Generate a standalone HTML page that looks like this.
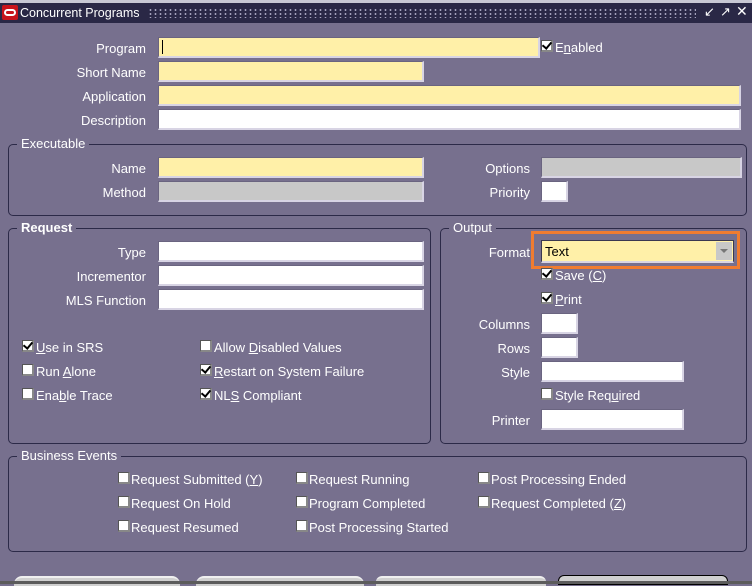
<!DOCTYPE html>
<html><head><meta charset="utf-8"><style>
*{margin:0;padding:0;box-sizing:border-box}
body{width:752px;height:584px;overflow:hidden;background:#77708e;font-family:"Liberation Sans",sans-serif;font-size:13px;color:#fff;position:relative}
.a{position:absolute}
.t{position:absolute;white-space:nowrap;line-height:14px;margin-top:1px}
.r{text-align:right}
.f{position:absolute;height:21px;border-top:1px solid #6a6480;border-left:1px solid #6a6480;border-bottom:2px solid #d8d4e4;border-right:2px solid #d8d4e4}
.y{background:#fff0a8}.g{background:#c8c8c8}.w{background:#fff}
.box{position:absolute;border:1px solid #2c2a48;border-radius:5px}
.lg{position:absolute;background:#77708e;padding:0 4px;line-height:14px;top:-8px;left:8px}
.cb{position:absolute;width:12px;height:12px;background:#fff;border-right:2px solid #888;border-bottom:2px solid #888;border-top:1px solid #555;border-left:1px solid #555}
.cb.c::after{content:"";position:absolute;left:2px;top:-1px;width:4px;height:7px;border:solid #000;border-width:0 2.5px 2.5px 0;transform:rotate(40deg)}
.cl{position:absolute;white-space:nowrap;line-height:14px;margin-top:1px}
u{text-decoration:underline}
</style></head><body>
<div class="a" style="left:0;top:0;width:752px;height:3px;background:#c8c8d4"></div>
<div class="a" style="left:0;top:3px;width:752px;height:20px;background:#2a2846"></div>
<div class="a" style="left:148px;top:8px;width:548px;height:10px;background-image:radial-gradient(#a4a2bc 1px,transparent 1.2px);background-size:5px 4px"></div>
<div class="a" style="left:2px;top:5px;width:16px;height:15px;background:#c8141c;border-radius:2px"></div>
<div class="a" style="left:4px;top:9px;width:12px;height:7px;border:2px solid #fff;border-radius:4px"></div>
<div class="t" style="left:20px;top:5px;color:#fff;font-size:12.5px">Concurrent Programs</div>
<div class="t" style="left:704px;top:4px;font-size:13px">&#8601;</div>
<div class="t" style="left:720px;top:4px;font-size:13px">&#8599;</div>
<div class="t" style="left:736px;top:3px;font-size:14px">&#10005;</div>

<div class="t r" style="right:606px;top:41px">Program</div>
<div class="f y" style="left:158px;top:37px;width:382px"></div>
<div class="a" style="left:162px;top:40px;width:1px;height:14px;background:#000"></div>
<div class="cb c" style="left:541px;top:40px"></div><div class="cl" style="left:555px;top:40px">E<u>n</u>abled</div>
<div class="t r" style="right:606px;top:65px">Short Name</div>
<div class="f y" style="left:158px;top:61px;width:266px"></div>
<div class="t r" style="right:606px;top:89px">Application</div>
<div class="f y" style="left:158px;top:85px;width:583px"></div>
<div class="t r" style="right:606px;top:113px">Description</div>
<div class="f w" style="left:158px;top:109px;width:583px"></div>

<div class="box" style="left:8px;top:144px;width:739px;height:72px"><div class="lg">Executable</div></div>
<div class="t r" style="right:606px;top:161px">Name</div>
<div class="f y" style="left:158px;top:157px;width:266px"></div>
<div class="t r" style="right:606px;top:185px">Method</div>
<div class="f g" style="left:158px;top:181px;width:266px"></div>
<div class="t r" style="right:222px;top:161px">Options</div>
<div class="f g" style="left:541px;top:157px;width:201px"></div>
<div class="t r" style="right:222px;top:185px">Priority</div>
<div class="f w" style="left:541px;top:181px;width:27px"></div>

<div class="box" style="left:8px;top:228px;width:423px;height:216px"><div class="lg" style="font-weight:bold">Request</div></div>
<div class="t r" style="right:606px;top:245px">Type</div>
<div class="f w" style="left:158px;top:241px;width:266px"></div>
<div class="t r" style="right:606px;top:269px">Incrementor</div>
<div class="f w" style="left:158px;top:265px;width:266px"></div>
<div class="t r" style="right:606px;top:293px">MLS Function</div>
<div class="f w" style="left:158px;top:289px;width:266px"></div>
<div class="cb c" style="left:22px;top:340px"></div><div class="cl" style="left:36px;top:340px"><u>U</u>se in SRS</div>
<div class="cb" style="left:22px;top:364px"></div><div class="cl" style="left:36px;top:364px">Run <u>A</u>lone</div>
<div class="cb" style="left:22px;top:388px"></div><div class="cl" style="left:36px;top:388px">Ena<u>b</u>le Trace</div>
<div class="cb" style="left:200px;top:340px"></div><div class="cl" style="left:214px;top:340px">Allow <u>D</u>isabled Values</div>
<div class="cb c" style="left:200px;top:364px"></div><div class="cl" style="left:214px;top:364px"><u>R</u>estart on System Failure</div>
<div class="cb c" style="left:200px;top:388px"></div><div class="cl" style="left:214px;top:388px">NL<u>S</u> Compliant</div>

<div class="box" style="left:440px;top:228px;width:307px;height:216px"><div class="lg">Output</div></div>
<div class="t r" style="right:222px;top:245px">Format</div>
<div class="a" style="left:531px;top:231px;width:209px;height:38px;border:3px solid #f07c30"></div>
<div class="f y" style="left:541px;top:240px;width:193px;height:23px;border:1px solid #3a3850;border-bottom:2px solid #d8d4e4"></div>
<div class="t" style="left:545px;top:244px;color:#000">Text</div>
<div class="a" style="left:716px;top:242px;width:16px;height:18px;background:#c8c8c8"></div>
<div class="a" style="left:720px;top:249px;border-left:4px solid transparent;border-right:4px solid transparent;border-top:4px solid #777"></div>
<div class="cb c" style="left:541px;top:268px"></div><div class="cl" style="left:555px;top:268px">Save (<u>C</u>)</div>
<div class="cb c" style="left:541px;top:292px"></div><div class="cl" style="left:555px;top:292px"><u>P</u>rint</div>
<div class="t r" style="right:222px;top:317px">Columns</div>
<div class="f w" style="left:541px;top:313px;width:37px"></div>
<div class="t r" style="right:222px;top:341px">Rows</div>
<div class="f w" style="left:541px;top:337px;width:37px"></div>
<div class="t r" style="right:222px;top:365px">Style</div>
<div class="f w" style="left:541px;top:361px;width:143px"></div>
<div class="cb" style="left:541px;top:388px"></div><div class="cl" style="left:555px;top:388px">Style Req<u>u</u>ired</div>
<div class="t r" style="right:222px;top:413px">Printer</div>
<div class="f w" style="left:541px;top:409px;width:143px"></div>

<div class="box" style="left:8px;top:456px;width:739px;height:96px"><div class="lg">Business Events</div></div>
<div class="cb" style="left:118px;top:472px"></div><div class="cl" style="left:131px;top:472px">Request Submitted (<u>Y</u>)</div>
<div class="cb" style="left:118px;top:496px"></div><div class="cl" style="left:131px;top:496px">Request On Hold</div>
<div class="cb" style="left:118px;top:520px"></div><div class="cl" style="left:131px;top:520px">Request Resumed</div>
<div class="cb" style="left:296px;top:472px"></div><div class="cl" style="left:309px;top:472px">Request Running</div>
<div class="cb" style="left:296px;top:496px"></div><div class="cl" style="left:309px;top:496px">Program Completed</div>
<div class="cb" style="left:296px;top:520px"></div><div class="cl" style="left:309px;top:520px">Post Processing Started</div>
<div class="cb" style="left:478px;top:472px"></div><div class="cl" style="left:491px;top:472px">Post Processing Ended</div>
<div class="cb" style="left:478px;top:496px"></div><div class="cl" style="left:491px;top:496px">Request Completed (<u>Z</u>)</div>

<div class="a" style="left:14px;top:576px;width:166px;height:10px;background:#d0d0d0;border-top:2px solid #f0f0f0;border-radius:8px 8px 0 0"></div>
<div class="a" style="left:196px;top:576px;width:168px;height:10px;background:#d0d0d0;border-top:2px solid #f0f0f0;border-radius:8px 8px 0 0"></div>
<div class="a" style="left:376px;top:576px;width:170px;height:10px;background:#d0d0d0;border-top:2px solid #f0f0f0;border-radius:6px 6px 0 0"></div>
<div class="a" style="left:558px;top:575px;width:170px;height:10px;background:#d0d0d0;border:1px solid #000;border-radius:6px 6px 0 0"></div>
<div class="a" style="left:0;top:581px;width:752px;height:3px;background:#5c5c5c"></div>
</body></html>
